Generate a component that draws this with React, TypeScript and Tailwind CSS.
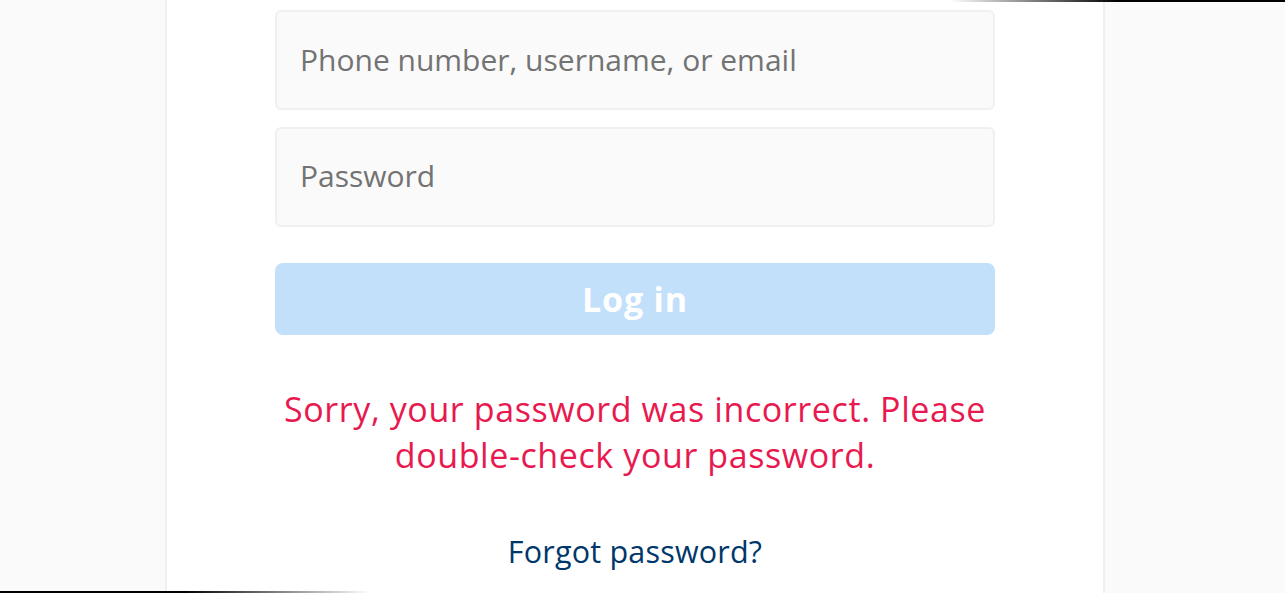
import React from "react";

export default function App() {
  const font = { fontFamily: '"Open Sans", "Noto Sans", sans-serif' };
  return (
    <div className="relative w-[1285px] h-[593px] bg-[#fafafa] overflow-hidden" style={font}>
      <div className="absolute top-0 left-[950px] w-[335px] h-[2px] bg-gradient-to-r from-transparent via-black to-black" />
      <div className="flex h-full">
        <div className="w-[165px] shrink-0" />
        <div className="w-[940px] h-full bg-white border-x-2 border-[#efefef] flex flex-col items-center pt-[10px]">
          <div className="w-[720px] flex flex-col gap-[17px]">
            <div className="h-[100px] rounded-[6px] border-2 border-[#f0f0f0] bg-[#fafafa] flex items-center pl-[23px] pb-[2px]">
              <span className="text-[30px] text-[#737373]">Phone number, username, or email</span>
            </div>
            <div className="h-[100px] rounded-[6px] border-2 border-[#f0f0f0] bg-[#fafafa] flex items-center pl-[23px] pb-[3px]">
              <span className="text-[30px] text-[#737373]">Password</span>
            </div>
          </div>
          <div className="w-[720px] h-[72px] mt-[36px] rounded-[8px] bg-[#c3e0fb] flex items-center justify-center">
            <span className="text-[34px] font-bold text-white tracking-[0.8px]">Log in</span>
          </div>
          <div className="mt-[51px] text-center text-[#e8194f] text-[34px] leading-[46px] tracking-[0.6px]">
            <div>Sorry, your password was incorrect. Please</div>
            <div>double-check your password.</div>
          </div>
          <div className="mt-[53px] text-[30.5px] leading-[40px] text-[#00376b] tracking-[0.2px]">Forgot password?</div>
        </div>
      </div>
      <div className="absolute bottom-0 left-0 w-[370px] h-[2px] bg-gradient-to-r from-black via-black to-transparent" />
    </div>
  );
}
